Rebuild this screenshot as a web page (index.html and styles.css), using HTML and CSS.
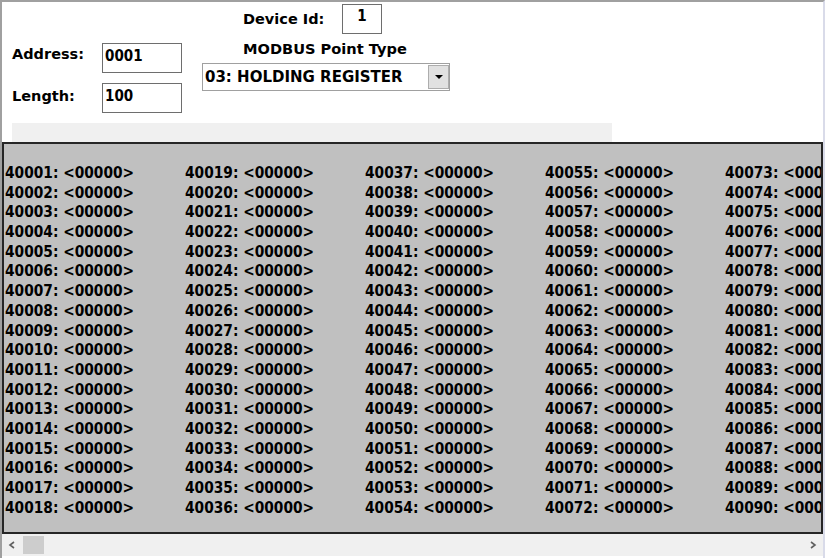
FILE: index.html
```html
<!DOCTYPE html>
<html>
<head>
<meta charset="utf-8">
<link rel="stylesheet" href="styles.css">
</head>
<body>
<div class="window">
  <div class="header">
    <div class="fields">
      <div class="field-row">
        <div class="label label-address">Address:</div>
        <div class="box box-wide">0001</div>
      </div>
      <div class="field-row">
        <div class="label label-length">Length:</div>
        <div class="box box-wide">100</div>
      </div>
    </div>
    <div class="device">
      <div class="device-row">
        <div class="label label-device">Device Id:</div>
        <div class="box box-id">1</div>
      </div>
      <div class="label label-type">MODBUS Point Type</div>
      <div class="select">
        <div class="select-text">03: HOLDING REGISTER</div>
        <div class="select-btn"><span class="arrow"></span></div>
      </div>
    </div>
  </div>
  <div class="strip"></div>
  <div class="grid" id="grid"></div>
  <div class="hscroll">
    <svg class="chev" width="8" height="8" viewBox="0 0 8 8"><path d="M6 1 L2 4 L6 7" fill="none" stroke="#606060" stroke-width="1.6"/></svg>
    <div class="thumb"></div>
    <div class="track"></div>
    <svg class="chev" width="8" height="8" viewBox="0 0 8 8"><path d="M2 1 L6 4 L2 7" fill="none" stroke="#606060" stroke-width="1.6"/></svg>
  </div>
</div>
<script>
  var g = document.getElementById('grid');
  var html = '';
  for (var i = 1; i <= 90; i++) {
    html += '<div class="cell">' + (40000 + i) + ': &lt;00000&gt;</div>';
  }
  g.innerHTML = html;
</script>
</body>
</html>
```

FILE: styles.css
```css
html, body {
  margin: 0;
  padding: 0;
  background: #ffffff;
}

body {
  font-family: "DejaVu Sans", sans-serif;
  font-weight: bold;
  font-size: 15px;
  color: #000;
}

.window {
  width: 821px;
  height: 556px;
  border-top: 2px solid #a0a0a0;
  border-left: 2px solid #a0a0a0;
  border-right: 2px solid #d9dbe9;
  display: flex;
  flex-direction: column;
}

.header {
  display: flex;
  height: 121px;
}

.fields {
  width: 190px;
  padding: 41px 0 0 10px;
  display: flex;
  flex-direction: column;
  gap: 10px;
}

.field-row {
  display: flex;
  align-items: flex-start;
}

.label {
  line-height: 18px;
  white-space: nowrap;
}

.label-address {
  width: 90px;
  padding-top: 2px;
  font-size: 14.5px;
}

.label-length {
  width: 90px;
  padding-top: 4px;
  font-size: 14.5px;
}

.box {
  box-sizing: border-box;
  border: 1px solid #6e6e6e;
  background: #fff;
  height: 30px;
  line-height: 18px;
  padding-top: 3px;
  font-family: "DejaVu Sans Condensed", "DejaVu Sans", sans-serif;
  font-stretch: condensed;
}

.box-wide {
  width: 80px;
  padding-left: 2px;
}

.box-id {
  width: 40px;
  text-align: center;
  padding-top: 2px;
}

.device {
  padding-top: 2px;
  display: flex;
  flex-direction: column;
}

.device-row {
  display: flex;
  margin-left: 41px;
}

.label-device {
  width: 99px;
  padding-top: 6px;
  font-size: 14.5px;
}

.label-type {
  margin: 6px 0 0 41px;
  font-size: 14.6px;
}

.select {
  box-sizing: border-box;
  margin-top: 5px;
  width: 248px;
  height: 28px;
  border: 1px solid #a0a0a0;
  background: #fff;
  display: flex;
}

.select-text {
  flex: 1;
  line-height: 18px;
  padding: 4px 0 0 2px;
  white-space: nowrap;
}

.select-btn {
  box-sizing: border-box;
  width: 21px;
  height: 24px;
  margin: 1px 0 0 0;
  background: #e1e1e1;
  border: 1px solid #adadad;
  display: flex;
  align-items: center;
  justify-content: center;
}

.arrow {
  width: 0;
  height: 0;
  border-left: 4px solid transparent;
  border-right: 4px solid transparent;
  border-top: 4px solid #000;
}

.strip {
  margin-left: 10px;
  width: 600px;
  height: 19px;
  background: #f0f0f0;
}

.grid {
  box-sizing: border-box;
  height: 392px;
  border: 2px solid #262626;
  background: #c0c0c0;
  overflow: hidden;
  padding: 20px 0 0 1px;
  display: grid;
  grid-auto-flow: column;
  grid-template-rows: repeat(18, 19.7px);
  grid-auto-columns: 180px;
  font-family: "DejaVu Sans Condensed", "DejaVu Sans", sans-serif;
  font-stretch: condensed;
  font-size: 15.3px;
  line-height: 19.7px;
}

.cell {
  white-space: nowrap;
}

.hscroll {
  height: 22px;
  background: #f0f0f0;
  display: flex;
  align-items: center;
  padding: 0 6px;
}

.chev {
  flex: none;
}

.thumb {
  width: 21px;
  height: 18px;
  background: #cdcdcd;
  margin-left: 7px;
}

.track {
  flex: 1;
}
```
